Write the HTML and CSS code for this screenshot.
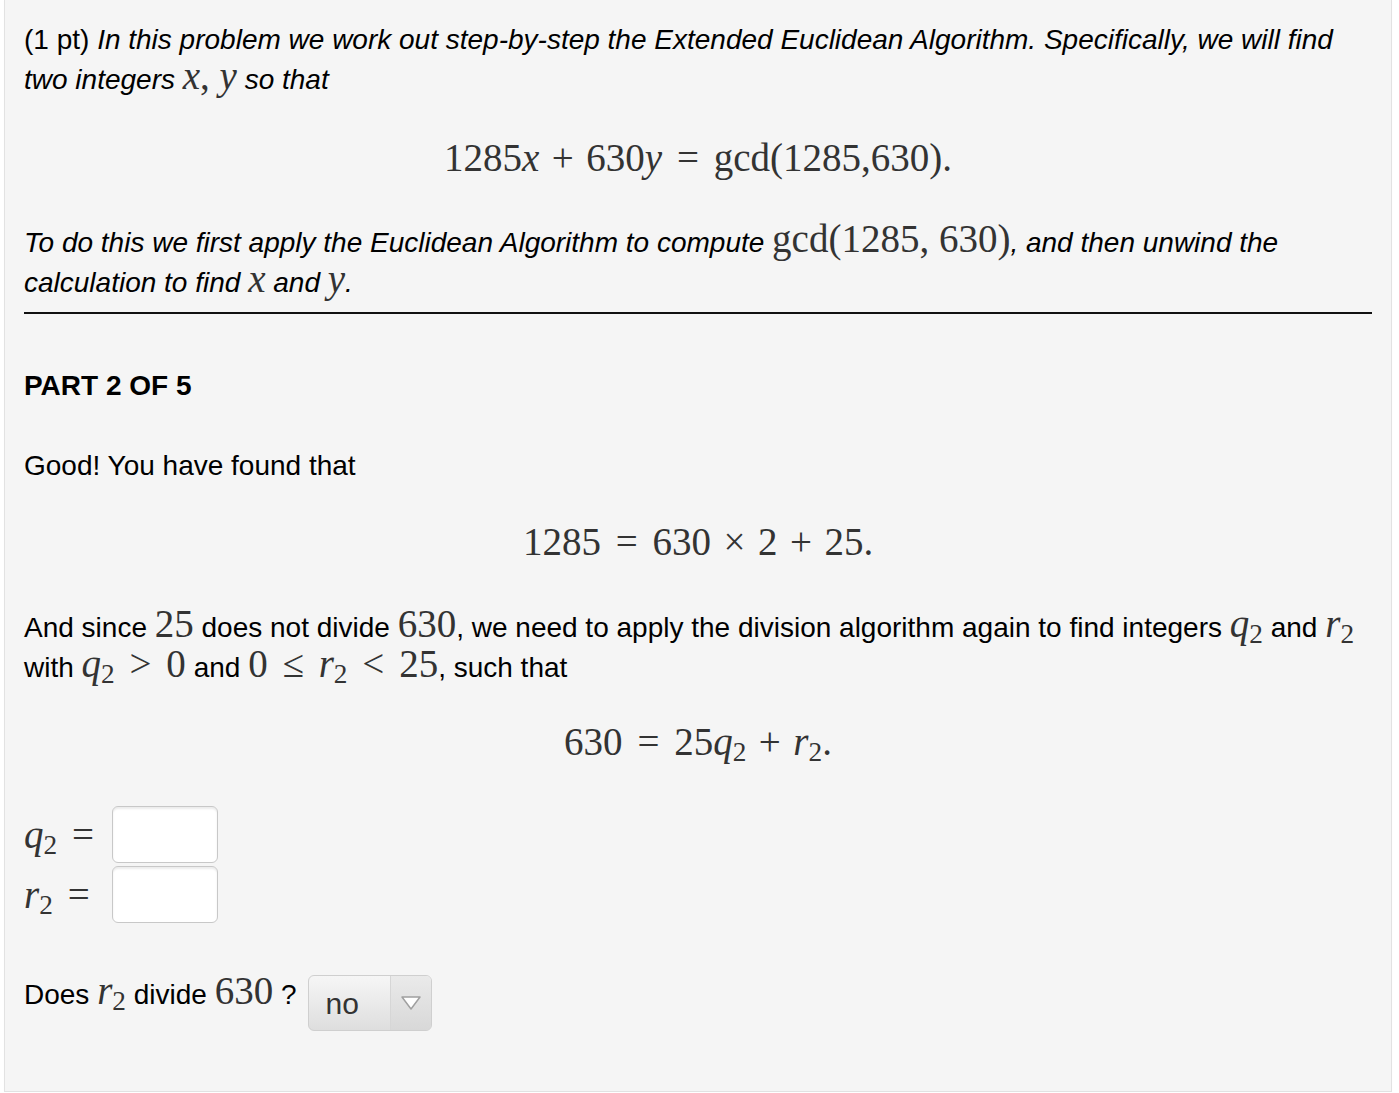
FILE: index.html
```html
<!DOCTYPE html>
<html>
<head>
<meta charset="utf-8">
<link rel="stylesheet" href="styles.css">
</head>
<body>
<div class="panel">
  <p class="para intro">(1 pt) <em>In this problem we work out step-by-step the Extended Euclidean Algorithm. Specifically, we will find<br>two integers <span class="m"><i>x</i>, <i>y</i></span> so that</em></p>

  <div class="disp d1"><span class="m">1285<i>x</i><span class="bin">+</span>630<i>y</i><span class="rel">=</span>gcd(1285,630).</span></div>

  <p class="para"><em>To do this we first apply the Euclidean Algorithm to compute <span class="m">gcd(1285, 630)</span>, and then unwind the<br>calculation to find <span class="m"><i>x</i></span> and <span class="m"><i>y</i></span>.</em></p>

  <hr class="rule">

  <h2 class="part">PART 2 OF 5</h2>

  <p class="para good">Good! You have found that</p>

  <div class="disp d2"><span class="m">1285<span class="rel">=</span>630<span class="bin">×</span>2<span class="bin">+</span>25.</span></div>

  <p class="para since">And since <span class="m">25</span> does not divide <span class="m">630</span>, we need to apply the division algorithm again to find integers <span class="m"><i>q</i><sub>2</sub></span> and <span class="m"><i>r</i><sub>2</sub></span><br>with <span class="m"><i>q</i><sub>2</sub><span class="rel">&gt;</span>0</span> and <span class="m">0<span class="rel">≤</span><i>r</i><sub>2</sub><span class="rel">&lt;</span>25</span>, such that</p>

  <div class="disp d3"><span class="m">630<span class="rel">=</span>25<i>q</i><sub>2</sub><span class="bin">+</span><i>r</i><sub>2</sub>.</span></div>

  <div class="answers">
    <div class="ans-row"><span class="m lbl"><i>q</i><sub>2</sub><span class="rel">=</span></span><span class="box"></span></div>
    <div class="ans-row"><span class="m lbl"><i>r</i><sub>2</sub><span class="rel">=</span></span><span class="box"></span></div>
  </div>

  <div class="question">
    <span class="qtext">Does <span class="m"><i>r</i><sub>2</sub></span> divide <span class="m">630</span> ?</span>
    <span class="select"><span class="sel-val">no</span><span class="sel-arrow"><svg width="22" height="16" viewBox="0 0 22 16"><polygon points="2,2 20,2 11,14" fill="#fff" stroke="#a0a0a0" stroke-width="1.5" stroke-linejoin="round"/></svg></span></span>
  </div>
</div>
</body>
</html>
```

FILE: styles.css
```css
html, body {
  margin: 0;
  padding: 0;
  background: #ffffff;
}

body {
  font-family: "Liberation Sans", Arial, Helvetica, sans-serif;
  font-size: 28px;
  line-height: 40px;
  color: #000;
}

.panel {
  margin: 0 7px 0 4px;
  padding: 20px 19px 60px 19px;
  background: #f5f5f5;
  border: 1px solid #e2e2e2;
  border-top: none;
  box-shadow: 0 1px 1px rgba(0,0,0,0.04);
}

.para {
  margin: 0;
}

.m {
  font-family: "Liberation Serif", "Times New Roman", serif;
  font-size: 39px;
  line-height: 0;
  color: #333;
  font-style: normal;
}

.m i {
  font-style: italic;
}

.m sub {
  font-size: 0.7em;
  line-height: 0;
  vertical-align: -0.22em;
  font-style: normal;
}

.bin {
  margin: 0 0.32em;
}

.rel {
  margin: 0 0.38em;
}

.disp {
  text-align: center;
  height: 50px;
  line-height: 50px;
}

.d1 {
  margin: 37px 0 36px;
}

.rule {
  margin: 9px 0 0;
  border: none;
  height: 2px;
  background: #111;
}

.part {
  margin: 52px 0 0;
  font-size: 28px;
  line-height: 40px;
  font-weight: bold;
}

.good {
  margin-top: 40px;
}

.d2 {
  margin: 35px 0 37px;
}

.d3 {
  margin: 33px 0 35px;
}

.answers {
  display: flex;
  flex-direction: column;
  gap: 3px;
}

.ans-row {
  display: flex;
  align-items: center;
  height: 57px;
}

.lbl {
  width: 88px;
  line-height: 40px;
}

.box {
  width: 104px;
  height: 55px;
  background: #fff;
  border: 1px solid #c8c8c8;
  border-radius: 6px;
  box-shadow: inset 0 2px 2px rgba(0,0,0,0.08);
}

.question {
  margin-top: 52px;
  display: flex;
  align-items: flex-start;
  gap: 11px;
}

.select {
  display: flex;
  width: 122px;
  height: 54px;
  border: 1px solid #cfcfcf;
  border-radius: 6px;
  background: linear-gradient(#f6f6f6, #dedede);
  overflow: hidden;
}

.sel-val {
  flex: 1;
  padding: 8px 0 0 17px;
  color: #333;
  font-size: 30px;
  line-height: 40px;
}

.sel-arrow {
  width: 40px;
  border-left: 1px solid #d6d6d6;
  display: flex;
  align-items: center;
  justify-content: center;
  background: linear-gradient(#eaeaea, #d8d8d8);
}
```
